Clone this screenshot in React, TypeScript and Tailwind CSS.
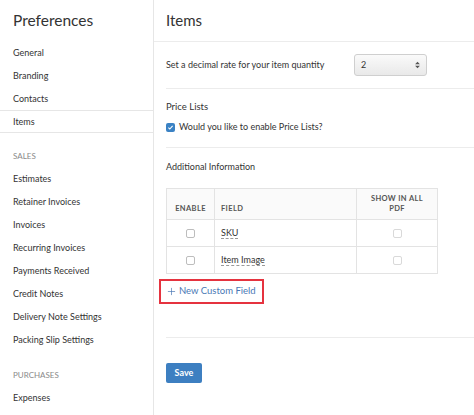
import { Plus } from "lucide-react";

const groups: { title?: string; items: string[] }[] = [
  { items: ["General", "Branding", "Contacts", "Items"] },
  {
    title: "SALES",
    items: [
      "Estimates",
      "Retainer Invoices",
      "Invoices",
      "Recurring Invoices",
      "Payments Received",
      "Credit Notes",
      "Delivery Note Settings",
      "Packing Slip Settings",
    ],
  },
  { title: "PURCHASES", items: ["Expenses"] },
];

function Box({ checked = false }: { checked?: boolean }) {
  if (checked) {
    return (
      <span className="w-[9px] h-[9px] rounded-[2px] bg-[#3b82c4] flex items-center justify-center">
        <svg viewBox="0 0 10 10" className="w-[7px] h-[7px]">
          <path d="M2 5.2l2 2 4-4.4" fill="none" stroke="white" strokeWidth="1.6" />
        </svg>
      </span>
    );
  }
  return <span className="w-[9px] h-[9px] rounded-[2px] border border-[#bdbdbd] bg-white" />;
}

export default function App() {
  return (
    <div className="flex w-[474px] h-[415px] bg-white text-[#333] overflow-hidden" style={{ fontFamily: "Lato, 'Open Sans', sans-serif" }}>
      {/* Sidebar */}
      <div className="w-[154px] shrink-0 border-r border-[#e6e6e6]">
        <div className="h-[41px] flex items-center pl-[13px] pt-[1px] text-[15.5px] text-[#333]">Preferences</div>
        {groups.map((g, gi) => (
          <div key={gi} className={gi === 0 ? "" : gi === 1 ? "mt-[11px]" : "mt-[12px]"}>
            {g.title && (
              <div className="h-[23px] flex items-center pl-[13px] text-[8px] text-[#8a8a8a]">{g.title}</div>
            )}
            {g.items.map((it) => (
              <div
                key={it}
                className={
                  "h-[23px] flex items-center pl-[13px] text-[9px] " +
                  (it === "Items" ? "border-y border-[#e6e6e6]" : "")
                }
              >
                {it}
              </div>
            ))}
          </div>
        ))}
      </div>

      {/* Main */}
      <div className="flex-1">
        <div className="h-[42px] flex items-center pl-[12px] text-[15px] border-b border-[#ececec]">Items</div>

        <div className="ml-[12px] pt-[12px] pb-[12px] border-b border-[#ececec] flex items-center">
          <span className="text-[9px] w-[188px]">Set a decimal rate for your item quantity</span>
          <div className="w-[73px] h-[22px] rounded-[3px] border border-[#cfcfcf] bg-gradient-to-b from-[#fafafa] to-[#e9e9e9] flex items-center justify-between px-[6px] text-[9px]">
            <span>2</span>
            <svg viewBox="0 0 6 10" className="w-[5px] h-[8px]">
              <path d="M0 4L3 1 6 4Z M0 6L3 9 6 6Z" fill="#555" />
            </svg>
          </div>
        </div>

        <div className="ml-[12px] pt-[10px] pb-[12px] border-b border-[#ececec]">
          <div className="h-[16px] flex items-center text-[9.5px]">Price Lists</div>
          <div className="h-[16px] mt-[4px] flex items-center gap-[4px] text-[9px]">
            <Box checked />
            <span>Would you like to enable Price Lists?</span>
          </div>
        </div>

        <div className="ml-[12px] pt-[11px]">
          <div className="h-[16px] flex items-center text-[9px]">Additional Information</div>
          <table className="mt-[13px] w-[272px] border-collapse border border-[#e3e3e3] text-[9px]">
            <thead>
              <tr className="h-[31px] bg-[#fafafa] text-[7.5px] tracking-wider text-[#555]">
                <th className="w-[48px] border border-[#e3e3e3] align-bottom pb-[5px] text-center font-bold">ENABLE</th>
                <th className="w-[142px] border border-[#e3e3e3] align-bottom pb-[5px] pl-[6px] text-left font-bold">FIELD</th>
                <th className="border border-[#e3e3e3] align-bottom pb-[5px] text-center leading-[10px] font-bold">
                  SHOW IN ALL
                  <br />
                  PDF
                </th>
              </tr>
            </thead>
            <tbody>
              {["SKU", "Item Image"].map((f) => (
                <tr key={f} className="h-[27px]">
                  <td className="border border-[#e3e3e3]">
                    <div className="flex justify-center">
                      <Box />
                    </div>
                  </td>
                  <td className="border border-[#e3e3e3] pl-[6px]">
                    <span className="border-b border-dashed border-[#999] leading-[12px]">{f}</span>
                  </td>
                  <td className="border border-[#e3e3e3]">
                    <div className="flex justify-center">
                      <span className="w-[9px] h-[9px] rounded-[2px] border border-[#d9d9d9] bg-white" />
                    </div>
                  </td>
                </tr>
              ))}
            </tbody>
          </table>

          <div className="mt-[5px] -ml-[7px] w-[105px] h-[25px] border-2 border-[#e5333f] flex items-center gap-[2px] pl-[5px] text-[9.5px] text-[#4a78b5] whitespace-nowrap">
            <Plus className="w-[11px] h-[11px] shrink-0" strokeWidth={1.5} />
            <span>New Custom Field</span>
          </div>
        </div>

        <div className="ml-[12px] mt-[33px] border-t border-[#ececec]" />
        <div className="ml-[12px] mt-[20px]">
          <button className="w-[36px] h-[20px] rounded-[2px] bg-[#3d7fc1] text-white text-[9px] font-bold">Save</button>
        </div>
      </div>
    </div>
  );
}
